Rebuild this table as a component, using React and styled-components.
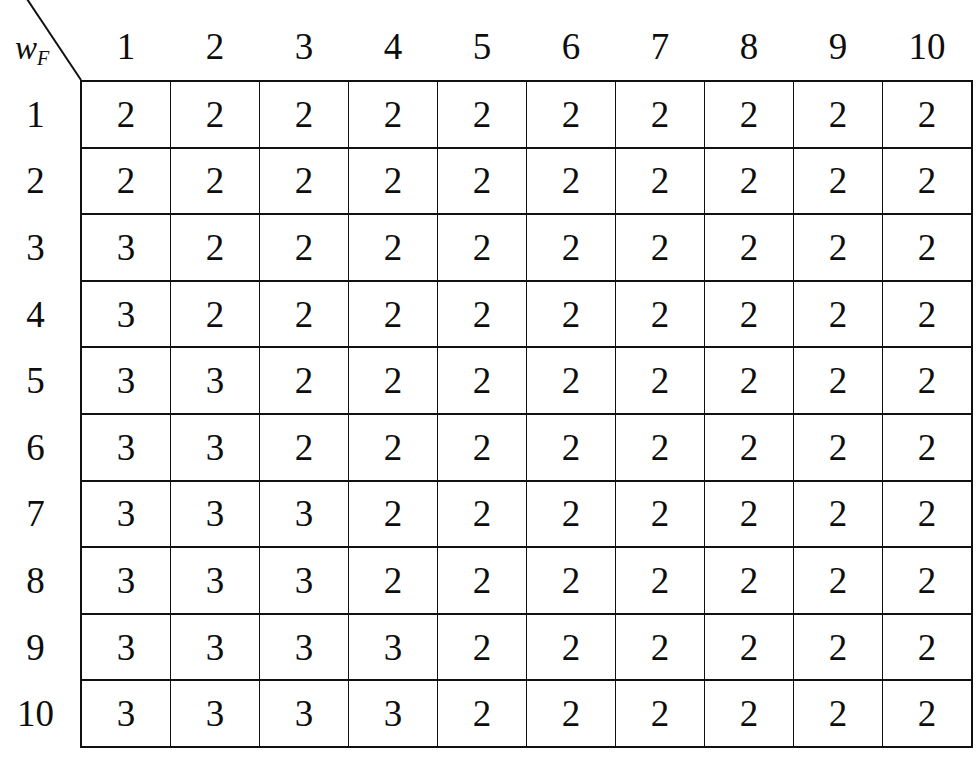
import React from 'react';
import styled, { createGlobalStyle } from 'styled-components';

const GlobalStyle = createGlobalStyle`
    html, body {
        margin: 0;
        padding: 0;
        background: #ffffff;
    }
    body {
        font-family: "Liberation Serif", "Times New Roman", serif;
        color: #0d0d0d;
    }
`;

const Figure = styled.div`
    display: grid;
    grid-template-columns: 80px 893px;
    grid-template-rows: 80px 668px;
    width: 979px;
    height: 757px;
    font-size: 37px;
    line-height: 1;
`;

const Corner = styled.div`
    position: relative;
    display: flex;
    align-items: flex-start;
    padding: 32px 0 0 15px;
    box-sizing: border-box;
`;

const Diagonal = styled.svg`
    position: absolute;
    left: 0;
    top: 0;
    width: 82px;
    height: 81px;
    overflow: visible;
`;

const AxisLabel = styled.span`
    font-style: italic;
    font-size: 33px;

    sub {
        font-size: 20px;
        vertical-align: -6px;
        margin-left: 0;
    }
`;

const HeaderStrip = styled.div`
    display: grid;
    grid-template-columns: repeat(10, 1fr);
    column-gap: 1px;
    padding: 0 2px;
`;

const ColHead = styled.div`
    display: flex;
    align-items: center;
    justify-content: center;
    padding-top: 12px;
`;

const LabelColumn = styled.div`
    display: grid;
    grid-template-rows: repeat(10, 1fr);
    row-gap: 2px;
    padding: 2px 0;
`;

const RowHead = styled.div`
    display: flex;
    align-items: center;
    justify-content: center;
    padding-right: 9px;
`;

const Board = styled.div`
    display: grid;
    grid-template-columns: repeat(10, 1fr);
    grid-template-rows: repeat(10, 1fr);
    column-gap: 1px;
    row-gap: 2px;
    background: #111111;
    border: 2px solid #111111;
`;

const Cell = styled.div`
    display: flex;
    align-items: center;
    justify-content: center;
    background: #ffffff;
`;

const threes = [0, 0, 1, 1, 2, 2, 3, 3, 4, 4];
const rows = threes.map(n => Array.from({ length: 10 }, (_, i) => (i < n ? 3 : 2)));
const labels = Array.from({ length: 10 }, (_, i) => i + 1);

export default function App() {
    return (
        <>
            <GlobalStyle />
            <Figure>
                <Corner>
                    <Diagonal viewBox="0 0 82 81">
                        <line x1="27" y1="-1" x2="81" y2="80" stroke="#111" strokeWidth="2" />
                    </Diagonal>
                    <AxisLabel>w<sub>F</sub></AxisLabel>
                </Corner>
                <HeaderStrip>
                    {labels.map(n => <ColHead key={n}>{n}</ColHead>)}
                </HeaderStrip>
                <LabelColumn>
                    {labels.map(n => <RowHead key={n}>{n}</RowHead>)}
                </LabelColumn>
                <Board>
                    {rows.map((row, r) =>
                        row.map((v, c) => <Cell key={`${r}-${c}`}>{v}</Cell>)
                    )}
                </Board>
            </Figure>
        </>
    );
}
